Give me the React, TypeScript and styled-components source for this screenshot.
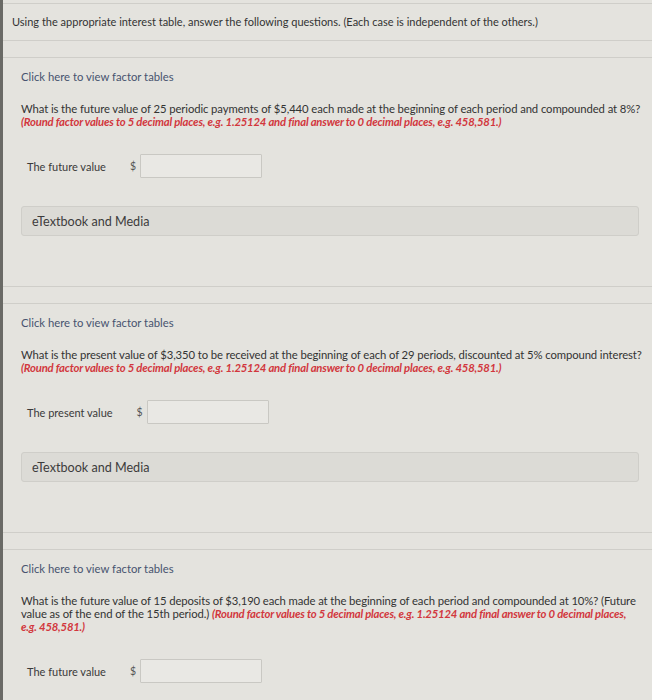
import React from "react";
import styled, { createGlobalStyle } from "styled-components";

const Global = createGlobalStyle`
  html, body { margin: 0; padding: 0; background: #e4e3de; }
  body { font-family: Lato, "Noto Sans", sans-serif; color: #3a3a3a; }
  * { box-sizing: border-box; }
`;

const Page = styled.div`
  display: flex;
  flex-direction: column;
  gap: 16px;
  padding-top: 3px;
  width: 652px;
  height: 700px;
  overflow: hidden;
  border-left: 3px solid #6a6a66;
`;

const HeaderCard = styled.div`
  border-top: 1px solid #cfcec9;
  border-bottom: 1px solid #cfcec9;
  padding: 11px 12px 11px 9px;
  font-size: 11px;
  line-height: 14px;
  color: #333;
`;

const Section = styled.section`
  border-top: 1px solid #cfcec9;
  border-bottom: 1px solid #cfcec9;
  padding: 11px 3px 50px 18px;
  display: flex;
  flex-direction: column;
`;

const FactorLink = styled.a`
  font-size: 11.3px;
  line-height: 16px;
  color: #47536f;
  text-decoration: none;
  cursor: pointer;
`;

const Question = styled.p<{ $maxWidth: number }>`
  margin: 17px 0 0;
  max-width: ${(p) => p.$maxWidth}px;
  font-size: 11.3px;
  line-height: 13px;
  color: #333;
  letter-spacing: -0.1px;
`;

const Hint = styled.span`
  color: #d2373d;
  font-style: italic;
  font-weight: 700;
  letter-spacing: -0.2px;
`;

const AnswerRow = styled.div`
  margin-top: 25px;
  padding-left: 6px;
  display: flex;
  align-items: center;
  height: 26px;
`;

const AnswerLabel = styled.label`
  font-size: 11px;
  color: #3a3a3a;
  margin-right: 24px;
`;

const Dollar = styled.span`
  font-size: 10.5px;
  color: #555;
  margin-right: 4px;
`;

const AnswerInput = styled.input`
  width: 122px;
  height: 24px;
  border: 1px solid #c9c8c3;
  background: #e9e8e4;
  border-radius: 1px;
  outline: none;
`;

const MediaBox = styled.div`
  margin: 27px 10px 0 0;
  height: 30px;
  display: flex;
  align-items: center;
  padding: 0 10px;
  background: #dcdbd6;
  border: 1px solid #cfcec9;
  border-radius: 3px;
  font-size: 12.6px;
  color: #3c3c3c;
`;

const HINT =
  "(Round factor values to 5 decimal places, e.g. 1.25124 and final answer to 0 decimal places, e.g. 458,581.)";

type Q = { question: string; label: string; width: number; media: boolean };

const questions: Q[] = [
  {
    question:
      "What is the future value of 25 periodic payments of $5,440 each made at the beginning of each period and compounded at 8%?",
    label: "The future value",
    width: 630,
    media: true,
  },
  {
    question:
      "What is the present value of $3,350 to be received at the beginning of each of 29 periods, discounted at 5% compound interest?",
    label: "The present value",
    width: 630,
    media: true,
  },
  {
    question:
      "What is the future value of 15 deposits of $3,190 each made at the beginning of each period and compounded at 10%? (Future value as of the end of the 15th period.)",
    label: "The future value",
    width: 618,
    media: false,
  },
];

export default function App() {
  return (
    <>
      <Global />
      <Page>
        <HeaderCard>
          Using the appropriate interest table, answer the following questions. (Each case is independent of the others.)
        </HeaderCard>
        {questions.map((q, i) => (
          <Section key={i}>
            <FactorLink>Click here to view factor tables</FactorLink>
            <Question $maxWidth={q.width}>
              {q.question}
              {q.media ? <br /> : " "}
              <Hint>{HINT}</Hint>
            </Question>
            <AnswerRow>
              <AnswerLabel>{q.label}</AnswerLabel>
              <Dollar>$</Dollar>
              <AnswerInput type="text" />
            </AnswerRow>
            {q.media && <MediaBox>eTextbook and Media</MediaBox>}
          </Section>
        ))}
      </Page>
    </>
  );
}
